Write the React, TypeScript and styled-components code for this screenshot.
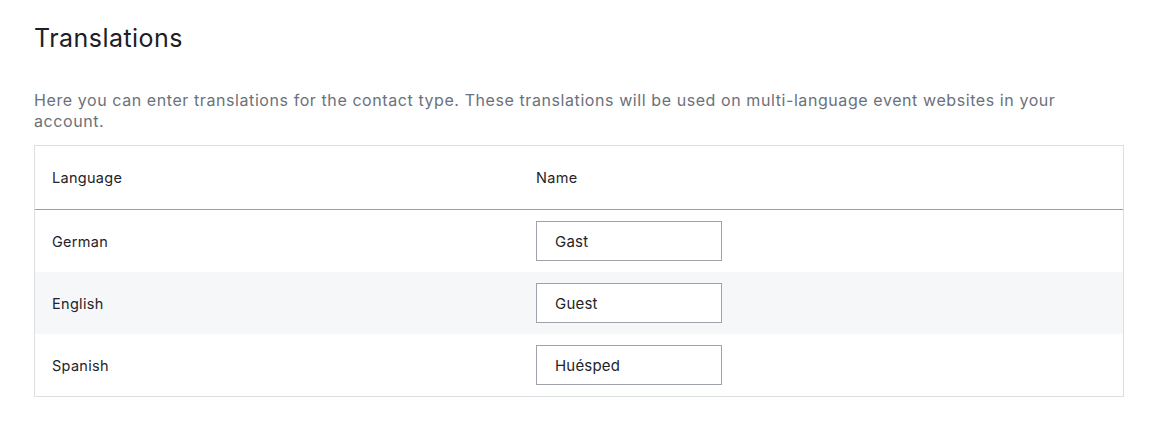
import React from 'react'
import styled, { createGlobalStyle } from 'styled-components'

const GlobalStyle = createGlobalStyle`
  html, body {
    margin: 0;
    padding: 0;
    background: #ffffff;
    font-family: Inter, "Noto Sans", sans-serif;
    color: #1f2329;
  }
`

const Page = styled.div`
  padding: 22px 31px 0 34px;
`

const Title = styled.h2`
  margin: 0;
  font-size: 25px;
  line-height: 32px;
  font-weight: 400;
  letter-spacing: 0.45px;
  color: #1c2026;
`

const Description = styled.p`
  margin: 36px 0 0;
  font-size: 16px;
  line-height: 21px;
  letter-spacing: 0.58px;
  color: #6b717b;
`

const Table = styled.div`
  margin-top: 13px;
  border: 1px solid #dcdee2;
`

const Row = styled.div<{ $striped?: boolean; $head?: boolean }>`
  display: grid;
  grid-template-columns: 484px 1fr;
  align-items: center;
  height: ${p => (p.$head ? '63px' : '62px')};
  background: ${p => (p.$striped ? '#f6f7f9' : '#ffffff')};
  border-bottom: ${p => (p.$head ? '1px solid #9c9ea2' : 'none')};
`

const Cell = styled.div`
  padding: 0 17px;
  font-size: 14.5px;
  letter-spacing: 0.3px;
  color: #1f2329;
`

const NameInput = styled.input`
  box-sizing: border-box;
  width: 186px;
  height: 40px;
  padding: 0 18px;
  border: 1px solid #9ea3ab;
  border-radius: 0;
  background: #ffffff;
  font-family: inherit;
  font-size: 15px;
  letter-spacing: 0.2px;
  color: #1f2329;
  outline: none;
`

const translations = [
  { language: 'German', name: 'Gast' },
  { language: 'English', name: 'Guest' },
  { language: 'Spanish', name: 'Huésped' },
]

export default function App() {
  return (
    <>
      <GlobalStyle />
      <Page>
        <Title>Translations</Title>
        <Description>
          Here you can enter translations for the contact type. These translations will be used on
          multi-language event websites in your account.
        </Description>
        <Table>
          <Row $head>
            <Cell>Language</Cell>
            <Cell>Name</Cell>
          </Row>
          {translations.map((t, i) => (
            <Row key={t.language} $striped={i % 2 === 1}>
              <Cell>{t.language}</Cell>
              <Cell>
                <NameInput defaultValue={t.name} />
              </Cell>
            </Row>
          ))}
        </Table>
      </Page>
    </>
  )
}
